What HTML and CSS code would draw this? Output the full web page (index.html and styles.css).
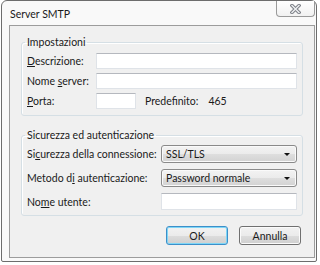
FILE: index.html
```html
<!DOCTYPE html>
<html lang="it">
<head>
  <meta charset="UTF-8">
  <title>Server SMTP</title>
  <link rel="stylesheet" href="styles.css">
</head>
<body>

<div class="window">
  <div class="titlebar">
    <span class="title">Server SMTP</span>
    <div class="close-btn">
      <svg width="11" height="10" viewBox="0 0 11 10">
        <path d="M2 1.5 L9 8.5 M9 1.5 L2 8.5" stroke="#7d8087" stroke-width="3.4" stroke-linecap="square"/>
        <path d="M2 1.5 L9 8.5 M9 1.5 L2 8.5" stroke="#eef0f3" stroke-width="1.4" stroke-linecap="square"/>
      </svg>
    </div>
  </div>

  <div class="client">
    <fieldset class="group">
      <legend>Impostazioni</legend>
      <div class="row">
        <label class="lbl"><u>D</u>escrizione:</label>
        <div class="textbox fill"></div>
      </div>
      <div class="row">
        <label class="lbl">Nome <u>s</u>erver:</label>
        <div class="textbox fill"></div>
      </div>
      <div class="row">
        <label class="lbl"><u>P</u>orta:</label>
        <div class="textbox port"></div>
        <span class="default-lbl">Predefinito:</span>
        <span class="default-val">465</span>
      </div>
    </fieldset>

    <fieldset class="group security">
      <legend>Sicurezza ed autenticazione</legend>
      <div class="row">
        <label class="lbl wide">Si<u>c</u>urezza della connessione:</label>
        <div class="combo"><span>SSL/TLS</span><span class="arrow"></span></div>
      </div>
      <div class="row">
        <label class="lbl wide">Metodo d<u>i</u> autenticazione:</label>
        <div class="combo"><span>Password normale</span><span class="arrow"></span></div>
      </div>
      <div class="row">
        <label class="lbl wide">No<u>m</u>e utente:</label>
        <div class="textbox fill tall"></div>
      </div>
    </fieldset>

    <div class="buttons">
      <button class="btn btn-default">OK</button>
      <button class="btn">Annulla</button>
    </div>
  </div>
</div>

</body>
</html>
```

FILE: styles.css
```css
body {
  margin: 0;
  padding: 0;
  background-color: #fff;
  font-family: Lato, "Open Sans", sans-serif;
  font-size: 10.5px;
  color: #1a1a1a;
}

.window {
  margin-left: 1px;
  width: 316px;
  height: 262px;
  box-sizing: border-box;
  border: 1px solid #6d6d6d;
  border-radius: 6px 6px 2px 2px;
  background-color: #f9f9f9;
  display: flex;
  flex-direction: column;
}

.titlebar {
  height: 24px;
  display: flex;
  align-items: flex-start;
}

.title {
  margin-left: 8px;
  margin-top: 7px;
  line-height: 12px;
}

.close-btn {
  margin-left: auto;
  margin-right: 1px;
  width: 39px;
  height: 16px;
  box-sizing: border-box;
  border: 1px solid #9a9a9a;
  border-top: none;
  border-radius: 0 0 4px 4px;
  background: linear-gradient(#ffffff, #f1f1f1);
  display: flex;
  align-items: center;
  justify-content: center;
}

.client {
  flex: 1;
  margin: 0 1px 3px 7px;
  padding: 9px 11px 0 11px;
  border: 1px solid #9c9c9c;
  background-color: #f0f0f0;
  display: flex;
  flex-direction: column;
}

.group {
  margin: 0;
  padding: 4px 5px 6px 5px;
  border: 1px solid #d5dfe5;
  border-radius: 3px;
  box-shadow: inset 1px 1px 0 #fff;
  display: flex;
  flex-direction: column;
  gap: 4px;
}

.group legend {
  padding: 0 2px;
  margin-left: -2px;
  line-height: 14px;
}

.security {
  margin-top: 12px;
  padding-top: 3px;
  padding-bottom: 5px;
  gap: 6px;
}

.row {
  display: flex;
  align-items: center;
}

.lbl {
  width: 69px;
  flex-shrink: 0;
}

.lbl.wide {
  width: 134px;
}

.textbox {
  height: 16px;
  box-sizing: border-box;
  background-color: #fff;
  border: 1px solid #dfe3e8;
  border-top-color: #b5b8be;
}

.textbox.fill {
  flex: 1;
}

.textbox.tall {
  height: 17px;
}

.textbox.port {
  width: 40px;
}

.default-lbl {
  margin-left: 9px;
}

.default-val {
  margin-left: 10px;
}

.combo {
  flex: 1;
  height: 18px;
  box-sizing: border-box;
  border: 1px solid #8a8a8a;
  border-radius: 3px;
  background: linear-gradient(#f3f3f3 0%, #ebebeb 50%, #dedede 50%, #d2d2d2 100%);
  box-shadow: inset 0 0 0 1px #fafafa;
  display: flex;
  align-items: center;
  padding: 0 6px 0 4px;
}

.arrow {
  margin-left: auto;
  width: 0;
  height: 0;
  border-left: 3px solid transparent;
  border-right: 3px solid transparent;
  border-top: 3px solid #111;
}

.buttons {
  margin-top: 10px;
  margin-right: 2px;
  display: flex;
  justify-content: flex-end;
  gap: 11px;
}

.btn {
  width: 62px;
  height: 19px;
  padding: 0;
  font-family: inherit;
  font-size: inherit;
  color: #1a1a1a;
  border: 1px solid #707070;
  border-radius: 3px;
  background: linear-gradient(#f2f2f2 0%, #ebebeb 50%, #dddddd 50%, #cfcfcf 100%);
  box-shadow: inset 0 0 0 1px #fbfbfb;
}

.btn-default {
  border-color: #3c8fc9;
  box-shadow: inset 0 0 0 1px #7fd6f6;
}
```
